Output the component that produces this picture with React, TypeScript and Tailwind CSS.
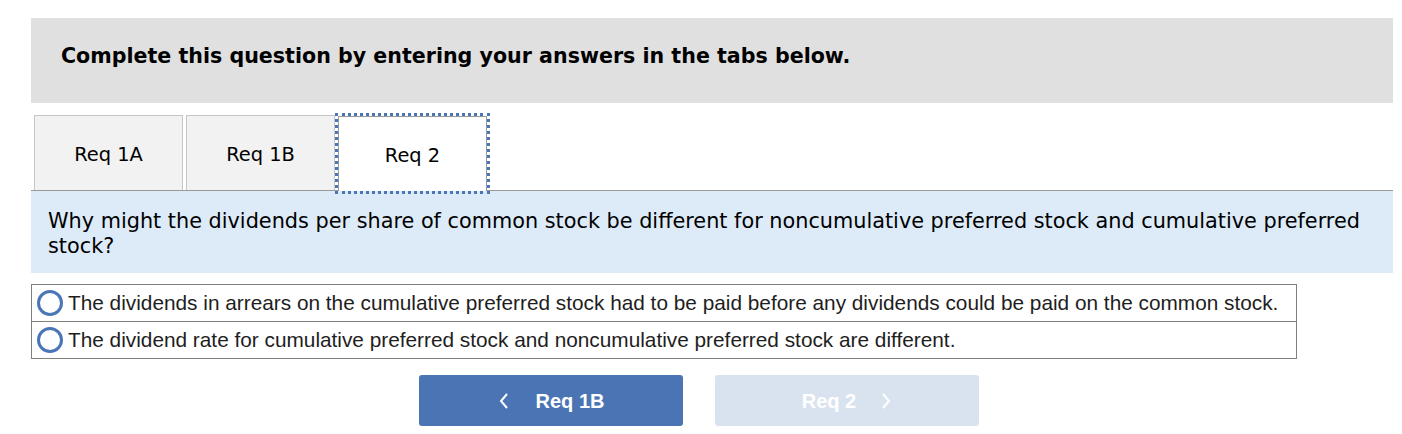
import React from "react";

const Radio = () => (
  <span className="inline-block w-[26px] h-[26px] rounded-full border-[3px] border-[#4a76b8] bg-white shrink-0" />
);

const Chevron = ({ dir }: { dir: "left" | "right" }) => (
  <svg width="12" height="20" viewBox="0 0 12 20" fill="none" className="shrink-0">
    {dir === "left" ? (
      <polyline points="9,3 3,10 9,17" stroke="currentColor" strokeWidth="2" fill="none" />
    ) : (
      <polyline points="3,3 9,10 3,17" stroke="currentColor" strokeWidth="2" fill="none" />
    )}
  </svg>
);

export default function App() {
  const verdana = { fontFamily: '"DejaVu Sans", Verdana, sans-serif' };
  const arial = { fontFamily: '"Liberation Sans", Arial, sans-serif' };
  return (
    <div className="w-[1402px] h-[434px] bg-white overflow-hidden">
      <div className="ml-[31px] pt-[18px] w-[1362px]">
        <div className="h-[85px] bg-[#e0e0e0] pl-[30px] pt-[26px]" style={verdana}>
          <div className="text-[20.6px] font-bold leading-[25px] text-black">
            Complete this question by entering your answers in the tabs below.
          </div>
        </div>

        <div className="mt-[12px] flex items-end gap-[3px] pl-[3px] border-b border-[#9a9a9a] h-[76px]" style={verdana}>
          <div className="w-[149px] h-[75px] pt-[3px] bg-[#f2f2f2] border border-b-0 border-[#c6c6c6] flex items-center justify-center text-[19.4px] text-black">
            Req 1A
          </div>
          <div className="w-[149px] h-[75px] pt-[3px] bg-[#f2f2f2] border border-b-0 border-[#c6c6c6] flex items-center justify-center text-[19.4px] text-black">
            Req 1B
          </div>
          <div className="w-[149px] h-[75px] pt-[3px] -mb-px bg-white border border-b-0 border-[#999] outline-3 outline-dotted outline-[#4a76b8] flex items-center justify-center text-[19.4px] text-black">
            Req 2
          </div>
        </div>

        <div className="h-[82px] bg-[#ddebf8] pl-[17px] pr-[20px] pt-[18px]" style={verdana}>
          <div className="text-[20.8px] leading-[25px] text-black">
            Why might the dividends per share of common stock be different for noncumulative preferred stock and cumulative preferred stock?
          </div>
        </div>

        <div className="mt-[11px] w-[1266px] border border-[#7f7f7f]" style={arial}>
          <div className="h-[37px] flex items-center gap-[5px] pl-[5px] border-b border-[#7f7f7f] text-[20.8px] text-[#1e1e1e]">
            <Radio />
            <span>The dividends in arrears on the cumulative preferred stock had to be paid before any dividends could be paid on the common stock.</span>
          </div>
          <div className="h-[36px] flex items-center gap-[5px] pl-[5px] text-[20.8px] text-[#1e1e1e]">
            <Radio />
            <span>The dividend rate for cumulative preferred stock and noncumulative preferred stock are different.</span>
          </div>
        </div>

        <div className="mt-[16px] flex gap-[32px] pl-[388px]" style={arial}>
          <div className="w-[264px] h-[51px] rounded-[3px] bg-[#4a74b3] flex items-center justify-center gap-[26px] text-white text-[20px] font-bold">
            <Chevron dir="left" />
            <span>Req 1B</span>
          </div>
          <div className="w-[264px] h-[51px] rounded-[3px] bg-[#d9e3ef] flex items-center justify-center gap-[24px] text-white text-[20px] font-bold">
            <span>Req 2</span>
            <Chevron dir="right" />
          </div>
        </div>
      </div>
    </div>
  );
}
